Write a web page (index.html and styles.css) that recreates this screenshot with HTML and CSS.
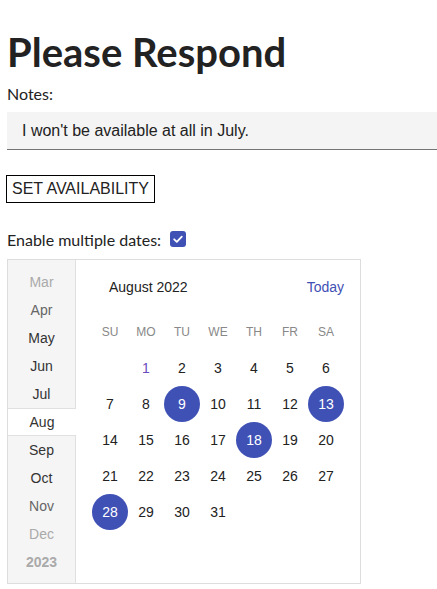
FILE: index.html
```html
<!DOCTYPE html>
<html lang="en">
<head>
<meta charset="utf-8">
<title>Please Respond</title>
<link rel="stylesheet" href="styles.css">
</head>
<body>
<h1 class="title">Please Respond</h1>
<div class="label">Notes:</div>
<div class="notes">I won't be available at all in July.</div>
<button class="set-btn" type="button">SET AVAILABILITY</button>
<div class="multi">
  <span>Enable multiple dates:</span>
  <span class="check"><svg viewBox="0 0 16 16" width="16" height="16"><path d="M4.2 8.3 L6.8 10.8 L11.8 5.6" fill="none" stroke="#fff" stroke-width="1.8" stroke-linecap="round" stroke-linejoin="round"/></svg></span>
</div>
<div class="calendar">
  <ul class="months">
    <li class="fade2">Mar</li>
    <li class="fade1">Apr</li>
    <li>May</li>
    <li>Jun</li>
    <li>Jul</li>
    <li class="current">Aug</li>
    <li>Sep</li>
    <li>Oct</li>
    <li class="fade1">Nov</li>
    <li class="fade2">Dec</li>
    <li class="year">2023</li>
  </ul>
  <div class="month">
    <div class="head">
      <span class="mname">August 2022</span>
      <span class="today">Today</span>
    </div>
    <div class="grid">
      <span class="wd">SU</span><span class="wd">MO</span><span class="wd">TU</span><span class="wd">WE</span><span class="wd">TH</span><span class="wd">FR</span><span class="wd">SA</span>
      <span></span><span class="d first">1</span><span class="d">2</span><span class="d">3</span><span class="d">4</span><span class="d">5</span><span class="d">6</span>
      <span class="d">7</span><span class="d">8</span><span class="d sel">9</span><span class="d">10</span><span class="d">11</span><span class="d">12</span><span class="d sel">13</span>
      <span class="d">14</span><span class="d">15</span><span class="d">16</span><span class="d">17</span><span class="d sel">18</span><span class="d">19</span><span class="d">20</span>
      <span class="d">21</span><span class="d">22</span><span class="d">23</span><span class="d">24</span><span class="d">25</span><span class="d">26</span><span class="d">27</span>
      <span class="d sel">28</span><span class="d">29</span><span class="d">30</span><span class="d">31</span>
    </div>
  </div>
</div>
</body>
</html>
```
FILE: styles.css
```css
html, body {
  margin: 0;
  padding: 0;
  background: #fff;
}
body {
  padding: 0 0 0 7px;
  font-family: Lato, "Noto Sans", sans-serif;
  font-size: 16px;
  color: #222;
  overflow: hidden;
}
.title {
  font-family: Lato, sans-serif;
  font-weight: 700;
  font-size: 40px;
  line-height: 48px;
  margin: 28px 0 6px 0;
  color: #222;
}
.label {
  line-height: 24px;
  height: 24px;
}
.notes {
  margin-top: 6px;
  height: 37px;
  line-height: 37px;
  background: #f4f4f4;
  border-bottom: 1px solid #757575;
  padding-left: 15px;
  font-family: "Liberation Sans", Arial, sans-serif;
  font-size: 16px;
  color: #222;
}
.set-btn {
  display: block;
  margin: 25px 0 0 -1px;
  height: 28px;
  padding: 0 5px;
  border: 1px solid #000;
  background: #fff;
  font-family: "Liberation Sans", Arial, sans-serif;
  font-size: 16px;
  color: #222;
  border-radius: 0;
}
.multi {
  display: flex;
  align-items: center;
  gap: 9px;
  margin-top: 24px;
  height: 24px;
}
.check {
  width: 16px;
  height: 16px;
  border-radius: 3px;
  background: #3f51b5;
  display: flex;
}
.calendar {
  margin-top: 8px;
  width: 352px;
  height: 323px;
  border: 1px solid #ddd;
  display: flex;
  font-family: "Liberation Sans", Arial, sans-serif;
}
.months {
  list-style: none;
  margin: 0;
  padding: 8px 0 0 0;
  width: 67px;
  background: #f5f5f5;
  border-right: 1px solid #e0e0e0;
  display: flex;
  flex-direction: column;
}
.months li {
  height: 28px;
  line-height: 28px;
  text-align: center;
  font-size: 14px;
  color: #333;
}
.months li.fade1 { color: #666; }
.months li.fade2 { color: #aaa; }
.months li.year { color: #aaa; font-weight: 700; }
.months li.current {
  background: #fff;
  border-top: 1px solid #e0e0e0;
  border-bottom: 1px solid #e0e0e0;
  height: 26px;
  line-height: 26px;
  margin-right: -1px;
}
.month {
  padding: 8px 0 0 16px;
  width: 252px;
}
.head {
  height: 38px;
  display: flex;
  align-items: center;
  justify-content: space-between;
  font-size: 14px;
  padding-left: 17px;
}
.mname { color: #222; }
.today { color: #3f51b5; }
.grid {
  margin-top: 8px;
  display: grid;
  grid-template-columns: repeat(7, 36px);
  grid-auto-rows: 36px;
}
.grid span {
  display: flex;
  align-items: center;
  justify-content: center;
  font-size: 14px;
}
.wd {
  font-size: 12px !important;
  color: #888;
}
.d { color: #222; }
.d.first { color: #6a4bbd; }
.d.sel {
  background: #3f51b5;
  color: #fff;
  border-radius: 50%;
}
```
